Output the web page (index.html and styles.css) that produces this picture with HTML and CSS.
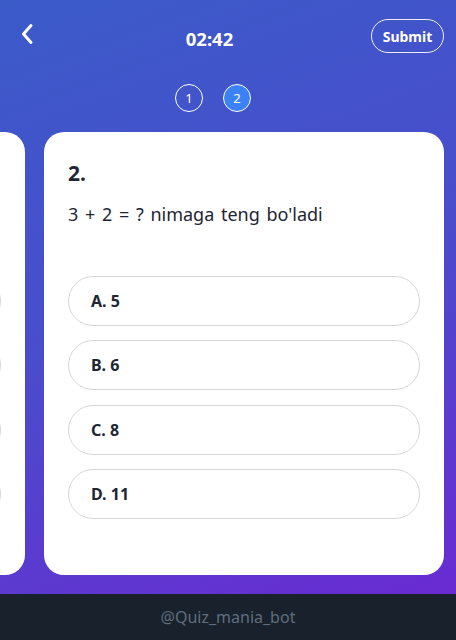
FILE: index.html
```html
<!DOCTYPE html>
<html>
<head>
<meta charset="utf-8">
<link rel="stylesheet" href="styles.css">
</head>
<body>
<div class="app">
  <main class="main">
    <header class="topbar">
      <button class="back" aria-label="Back">
        <svg width="14" height="22" viewBox="0 0 14 22"><path d="M11 2.5 L3.5 11 L11 19.5" fill="none" stroke="#fff" stroke-width="3" stroke-linecap="round" stroke-linejoin="round"/></svg>
      </button>
      <div class="timer">02:42</div>
      <button class="submit">Submit</button>
    </header>
    <nav class="pager">
      <span class="dot">1</span>
      <span class="dot active">2</span>
    </nav>
    <div class="viewport">
      <div class="track">
        <section class="card">
          <div class="qnum"></div>
          <div class="qtext"></div>
          <div class="options">
            <div class="option"></div>
            <div class="option"></div>
            <div class="option"></div>
            <div class="option"></div>
          </div>
        </section>
        <section class="card">
          <h2 class="qnum">2.</h2>
          <p class="qtext">3 + 2 = ? nimaga teng bo'ladi</p>
          <div class="options">
            <div class="option">A. 5</div>
            <div class="option">B. 6</div>
            <div class="option">C. 8</div>
            <div class="option">D. 11</div>
          </div>
        </section>
      </div>
    </div>
  </main>
  <footer class="footer">@Quiz_mania_bot</footer>
</div>
</body>
</html>
```
FILE: styles.css
```css
* { box-sizing: border-box; }
html, body { margin: 0; padding: 0; }
body {
  font-family: "Noto Sans", "Open Sans", sans-serif;
  width: 456px;
  height: 640px;
  overflow: hidden;
}
.app {
  display: flex;
  flex-direction: column;
  height: 640px;
}
.main {
  flex: 1;
  background: linear-gradient(160deg, #3b5bc9 0%, #4a4ccc 50%, #6a2bd2 100%);
  display: flex;
  flex-direction: column;
  overflow: hidden;
}
.topbar {
  display: flex;
  align-items: center;
  justify-content: space-between;
  padding: 19px 12px 0 20px;
  height: 53px;
}
.back {
  background: none;
  border: 0;
  padding: 0;
  width: 40px;
  height: 34px;
  display: flex;
  align-items: flex-start;
  padding-top: 4px;
  cursor: pointer;
}
.timer {
  color: #fff;
  font-weight: 700;
  font-size: 18.5px;
  padding-top: 4px;
  margin-left: -12px;
}
.submit {
  height: 34px;
  width: 73px;
  border: 1.5px solid rgba(255,255,255,0.9);
  border-radius: 17px;
  background: transparent;
  color: #fff;
  font-family: inherit;
  font-weight: 700;
  font-size: 14px;
  padding: 0;
}
.pager {
  display: flex;
  justify-content: center;
  gap: 20px;
  margin-top: 31px;
  padding-right: 30px;
}
.dot {
  width: 28px;
  height: 28px;
  border-radius: 50%;
  border: 1.5px solid #fff;
  color: #fff;
  font-size: 13px;
  display: flex;
  align-items: center;
  justify-content: center;
}
.dot.active { background: #3b82f6; }
.viewport {
  margin-top: 20px;
  overflow: hidden;
}
.track {
  display: flex;
  gap: 19px;
  margin-left: -375px;
}
.card {
  flex: 0 0 400px;
  height: 443px;
  background: #fff;
  border-radius: 20px;
  padding: 24px 24px 0 24px;
}
.qnum {
  margin: 0;
  font-size: 21px;
  font-weight: 700;
  color: #1e2533;
  line-height: 34px;
  height: 34px;
}
.qtext {
  margin: 11px 0 0 0;
  font-size: 18px;
  word-spacing: 2px;
  color: #1e2533;
  line-height: 26px;
  height: 26px;
}
.options {
  display: flex;
  flex-direction: column;
  gap: 14.3px;
  margin-top: 49px;
}
.option {
  height: 50px;
  border: 1px solid #d4d6da;
  border-radius: 25px;
  padding-left: 22px;
  display: flex;
  align-items: center;
  font-size: 16px;
  font-weight: 700;
  color: #1e2533;
}
.footer {
  height: 46px;
  background: #19212c;
  color: #5f6e7e;
  font-size: 16px;
  display: flex;
  align-items: center;
  justify-content: center;
}
```
